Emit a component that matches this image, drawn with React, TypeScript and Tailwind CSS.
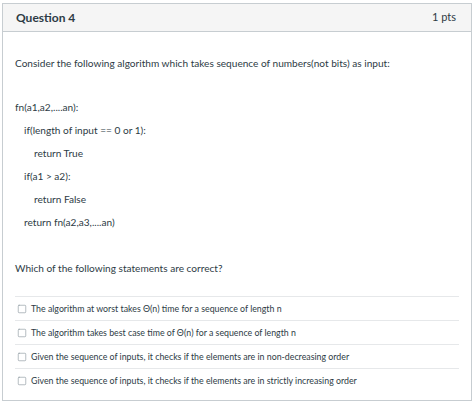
import { Square } from "lucide-react";

const answers = [
  "The algorithm at worst takes Θ(n) time for a sequence of length n",
  "The algorithm takes best case time of Θ(n) for a sequence of length n",
  "Given the sequence of inputs, it checks if the elements are in non-decreasing order",
  "Given the sequence of inputs, it checks if the elements are in strictly increasing order",
];

export default function App() {
  return (
    <div className="w-[474px] h-[410px] bg-white pt-[3px] pl-[2px] font-['Lato','Noto_Sans',sans-serif] text-[#2d3b45]">
      <div className="w-[470px] h-[398px] border border-[#c7cdd1] flex flex-col">
        <div className="h-[28px] bg-[#f5f5f5] border-b border-[#c7cdd1] flex items-center justify-between pl-[13px] pr-[15px]">
          <span className="text-[12px] font-bold">Question 4</span>
          <span className="text-[11px]">1 pts</span>
        </div>
        <div className="pl-[12px] pr-[12px] text-[10.1px]">
          <p className="mt-[23px] leading-[16px]">
            Consider the following algorithm which takes sequence of numbers(not bits) as input:
          </p>
          <div className="mt-[28px] flex flex-col gap-[7px] leading-[16px]">
            <p>fn(a1,a2,....an):</p>
            <p className="pl-[9px]">if(length of input == 0 or 1):</p>
            <p className="pl-[19px]">return True</p>
            <p className="pl-[9px]">if(a1 &gt; a2):</p>
            <p className="pl-[19px]">return False</p>
            <p className="pl-[9px]">return fn(a2,a3,....an)</p>
          </div>
          <p className="mt-[30px] leading-[16px]">Which of the following statements are correct?</p>
          <div className="mt-[20px] border-t border-[#e6e8ea]">
            {answers.map((a, i) => (
              <div
                key={i}
                className={`h-[24px] flex items-center gap-[4px] pl-[2px] text-[8.8px] ${i < 3 ? "border-b border-[#e6e8ea]" : ""}`}
              >
                <Square className="w-[10px] h-[10px] text-[#8a959d]" strokeWidth={1.5} />
                <span>{a}</span>
              </div>
            ))}
          </div>
        </div>
      </div>
    </div>
  );
}
